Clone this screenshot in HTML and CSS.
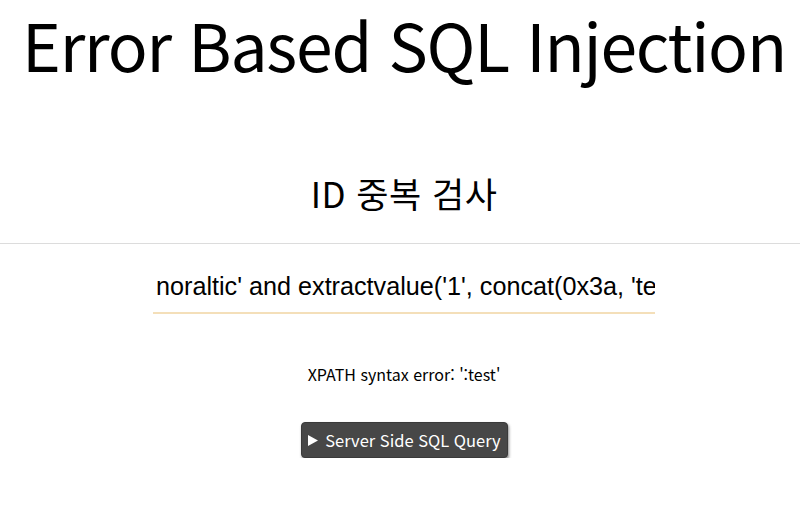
FILE: index.html
```html
<!DOCTYPE html>
<html lang="ko">
<head>
<meta charset="utf-8">
<title>Error Based SQL Injection</title>
<link rel="stylesheet" href="styles.css">
</head>
<body>
<div class="page">
  <h1 class="title">Error Based SQL Injection</h1>
  <h2 class="subtitle">ID 중복 검사</h2>
</div>
<hr class="rule">
<div class="page form">
  <input class="query" type="text" value="noraltic' and extractvalue('1', concat(0x3a, 'test')) -- ">
  <p class="result">XPATH syntax error: ':test'</p>
  <button class="run" type="button"><svg class="play" width="10" height="11" viewBox="0 0 10 11"><polygon points="0,0 10,5.5 0,11" fill="#fff"/></svg>Server Side SQL Query</button>
</div>
</body>
</html>
```
FILE: styles.css
```css
html, body {
  margin: 0;
  padding: 0;
  background: #fff;
}
body {
  font-family: "Noto Sans CJK KR", "Noto Sans", sans-serif;
  color: #000;
}
.page {
  padding-left: 8px;
  display: flex;
  flex-direction: column;
  align-items: center;
}
.title {
  margin: 3px 0 0;
  font-size: 66px;
  line-height: 80px;
  font-weight: 400;
  letter-spacing: -1.2px;
  white-space: nowrap;
}
.subtitle {
  margin: 90px 0 0;
  font-size: 35px;
  line-height: 40px;
  font-weight: 400;
  letter-spacing: 0.5px;
}
.rule {
  margin: 30px 0 0;
  border: 0;
  border-top: 1px solid #dcdcdc;
  height: 0;
}
.query {
  margin-top: 27px;
  box-sizing: border-box;
  width: 502px;
  height: 43px;
  padding: 0 0 11px 3px;
  border: 0;
  border-bottom: 2px solid #f4dfb9;
  outline: none;
  font-family: "Liberation Sans", Arial, sans-serif;
  font-size: 25.2px;
  line-height: 30px;
  color: #000;
  background: transparent;
}
.result {
  margin: 48px 0 0;
  font-size: 16px;
  line-height: 24px;
}
.run {
  margin-top: 36px;
  box-sizing: border-box;
  width: 207px;
  height: 36px;
  display: flex;
  align-items: center;
  justify-content: center;
  gap: 7px;
  padding: 0 0 0 1px;
  border: 1px solid #3a3a3a;
  border-radius: 4px;
  background: #474747;
  color: #fff;
  font-family: "Noto Sans CJK KR", "Noto Sans", sans-serif;
  font-size: 16.5px;
  box-shadow: 1px 2px 3px rgba(0, 0, 0, 0.45);
}
.play {
  display: block;
}
```
